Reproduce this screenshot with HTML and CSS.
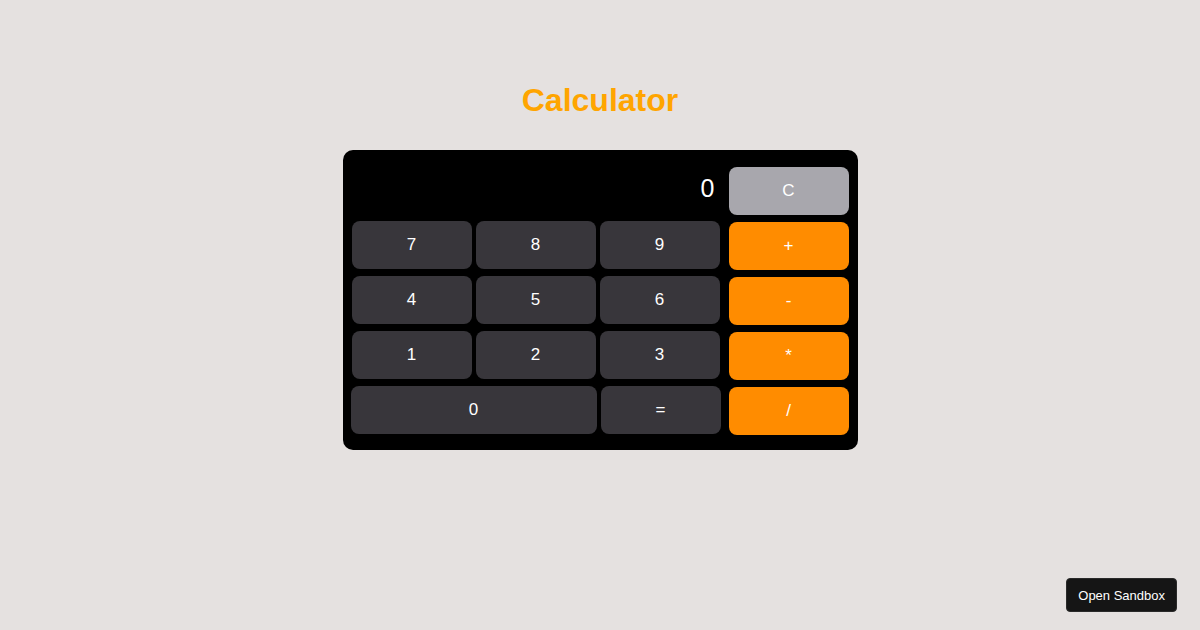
FILE: index.html
```html
<!DOCTYPE html>
<html lang="en">
<head>
<meta charset="utf-8">
<title>Calculator</title>
<link rel="stylesheet" href="styles.css">
</head>
<body>
<div class="page">
  <h1 class="title">Calculator</h1>
  <div class="calc">
    <div class="left">
      <div class="display">0</div>
      <div class="keys">
        <button class="btn num">7</button>
        <button class="btn num">8</button>
        <button class="btn num">9</button>
        <button class="btn num">4</button>
        <button class="btn num">5</button>
        <button class="btn num">6</button>
        <button class="btn num">1</button>
        <button class="btn num">2</button>
        <button class="btn num">3</button>
      </div>
      <div class="bottom">
        <button class="btn num zero">0</button>
        <button class="btn num">=</button>
      </div>
    </div>
    <div class="ops">
      <button class="btn clear">C</button>
      <button class="btn op">+</button>
      <button class="btn op">-</button>
      <button class="btn op">*</button>
      <button class="btn op">/</button>
    </div>
  </div>
</div>
<button class="sandbox">Open Sandbox</button>
</body>
</html>
```

FILE: styles.css
```css
html, body {
  margin: 0;
  padding: 0;
  background: #e5e1e0;
  font-family: "Liberation Sans", Arial, Helvetica, sans-serif;
}

.page {
  display: flex;
  flex-direction: column;
  align-items: center;
  padding-top: 82px;
}

.title {
  margin: 0 0 31px 0;
  font-size: 32px;
  line-height: 37px;
  font-weight: bold;
  color: #ffa500;
}

.calc {
  width: 515px;
  box-sizing: border-box;
  background: #000;
  border-radius: 10px;
  padding: 17px 9px 15px 9px;
  display: flex;
  gap: 9px;
}

.left {
  width: 368px;
  display: flex;
  flex-direction: column;
  gap: 7px;
}

.display {
  height: 47px;
  box-sizing: border-box;
  padding-right: 5px;
  display: flex;
  align-items: center;
  justify-content: flex-end;
  color: #fff;
  font-size: 25px;
  padding-bottom: 4px;
}

.keys {
  display: grid;
  grid-template-columns: repeat(3, 120px);
  grid-auto-rows: 48px;
  column-gap: 4px;
  row-gap: 7px;
}

.bottom {
  display: flex;
  gap: 4px;
  margin-left: -1px;
}

.bottom .btn {
  width: 120px;
  height: 48px;
  flex: none;
}

.bottom .zero {
  width: 246px;
}

.ops {
  width: 120px;
  display: flex;
  flex-direction: column;
  gap: 7px;
}

.ops .btn {
  height: 48px;
}

.btn {
  border: none;
  border-radius: 8px;
  color: #fff;
  font-family: "Liberation Sans", Arial, Helvetica, sans-serif;
  font-size: 17px;
  padding: 0;
  margin: 0;
}

.num {
  background: #38363b;
}

.clear {
  background: #a8a7ad;
}

.op {
  background: #ff8c00;
}

.sandbox {
  position: fixed;
  right: 23px;
  bottom: 18px;
  height: 34px;
  padding: 0 11px;
  background: #151515;
  color: #fff;
  border: 1px solid #2a2a2a;
  border-radius: 4px;
  font-family: "Liberation Sans", Arial, Helvetica, sans-serif;
  font-size: 13px;
}
```
